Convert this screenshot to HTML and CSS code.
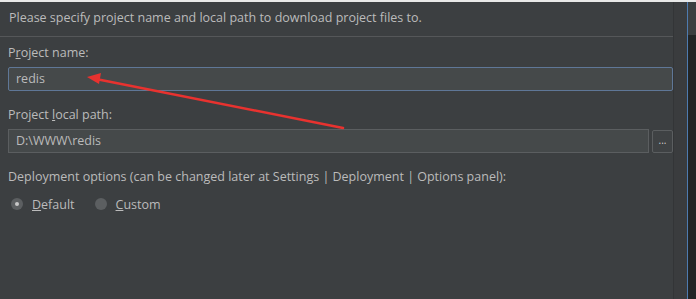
FILE: index.html
```html
<!DOCTYPE html>
<html lang="en">
<head>
  <meta charset="UTF-8">
  <title>Download Project</title>
  <link rel="stylesheet" href="styles.css">
</head>
<body>
<div class="window">
  <div class="panel">
    <p class="intro">Please specify project name and local path to download project files to.</p>
    <div class="sep"></div>
    <label class="field-label">P<u>r</u>oject name:</label>
    <div class="input focused">redis</div>
    <label class="field-label">Project <u>l</u>ocal path:</label>
    <div class="path-row">
      <div class="input">D:\WWW\redis</div>
      <div class="browse">...</div>
    </div>
    <p class="field-label">Deployment options (can be changed later at Settings | Deployment | Options panel):</p>
    <div class="radios">
      <span class="radio checked"></span><span class="radio-label"><u>D</u>efault</span>
      <span class="radio"></span><span class="radio-label"><u>C</u>ustom</span>
    </div>
  </div>
  <div class="edge"></div>
  <div class="side">
    <div class="side-top"></div>
  </div>

  <svg class="arrow" width="696" height="299" viewBox="0 0 696 299">
    <line x1="343" y1="128" x2="96" y2="79" stroke="#e8322f" stroke-width="2.5" stroke-linecap="round"/>
    <polygon points="87,77 101,73 99,84" fill="#e8322f"/>
  </svg>
</div>
</body>
</html>
```

FILE: styles.css
```css
body {
  margin: 0;
  background: #3c3f41;
  font-family: 'Open Sans', 'Noto Sans', sans-serif;
  font-size: 12.5px;
  color: #bbbbbb;
}
.window {
  position: relative;
  display: flex;
  height: 299px;
  overflow: hidden;
  border-top: 2px solid #e8e8e8;
  box-sizing: border-box;
}
.panel {
  width: 665px;
  padding: 0 0 0 8px;
  background: #3c3f41;
}
.intro {
  margin: 7px 0 0 1px;
  line-height: 18px;
}
.sep {
  height: 1px;
  background: #555759;
  margin: 9px 0 0 -8px;
}
.field-label {
  display: block;
  margin: 7px 0 0 0;
  line-height: 18px;
}
.input {
  height: 22px;
  line-height: 22px;
  border: 1px solid #5b5e60;
  background: #45494a;
  padding: 0 7px;
  margin-top: 5px;
  box-sizing: content-box;
}
.input.focused {
  border-color: #5f7797;
  margin-bottom: 15px;
  border-radius: 2px;
}
.path-row {
  display: flex;
  gap: 3px;
  margin-top: 5px;
  margin-bottom: 15px;
}
.path-row .input {
  flex: 1;
  margin-top: 0;
}
.browse {
  width: 19px;
  height: 21px;
  margin-top: 1px;
  border: 1px solid #5b5e60;
  border-radius: 2px;
  background: #3f4244;
  font-size: 10px;
  line-height: 18px;
  text-align: center;
  color: #cfcfcf;
}
.radios {
  display: flex;
  align-items: center;
  margin-top: 9px;
  height: 18px;
}
.radio {
  width: 12px;
  height: 12px;
  border-radius: 50%;
  background: #5c5f61;
  margin: 0 9px 0 3px;
  position: relative;
}
.radio.checked::after {
  content: "";
  position: absolute;
  left: 4px;
  top: 4px;
  width: 4px;
  height: 4px;
  border-radius: 50%;
  background: #c8c8c8;
}
.radio-label {
  margin-right: 17px;
}
.edge {
  width: 13px;
  background: #3a3c3e;
  border-left: 1px solid #333537;
  border-right: 1px solid #4e7bb0;
}
.side {
  flex: 1;
  background: #222526;
}
.side-top {
  height: 33px;
  background: #3c3f41;
}
.arrow {
  position: absolute;
  left: 0;
  top: -2px;
}
```
